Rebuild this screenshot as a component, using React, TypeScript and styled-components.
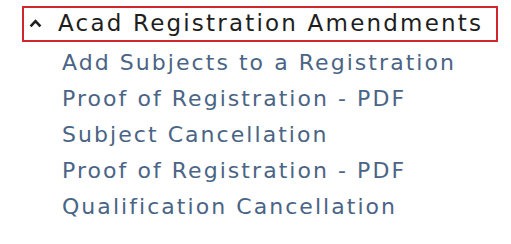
import React from "react";
import styled, { createGlobalStyle } from "styled-components";

const GlobalStyle = createGlobalStyle`
  html, body {
    margin: 0;
    padding: 0;
    background: #ffffff;
  }
  body {
    font-family: "DejaVu Sans", "Noto Sans", sans-serif;
  }
`;

const items = [
  "Add Subjects to a Registration",
  "Proof of Registration - PDF",
  "Subject Cancellation",
  "Proof of Registration - PDF",
  "Qualification Cancellation",
];

const Menu = styled.nav`
  padding: 6px 13px 0 22px;
  width: 476px;
`;

const Header = styled.button`
  display: flex;
  align-items: center;
  gap: 16px;
  width: 100%;
  height: 36px;
  box-sizing: border-box;
  padding: 0 0 2px 5px;
  border: 2px solid #d0272f;
  background: #fff;
  color: #1e1e1e;
  font-family: inherit;
  font-size: 23px;
  letter-spacing: 2.2px;
  white-space: nowrap;
  cursor: pointer;
`;

const Chevron = styled.svg`
  width: 13px;
  height: 9px;
  flex: none;
  margin-top: 1px;
`;

const List = styled.ul`
  list-style: none;
  margin: 1px 0 0;
  padding: 0 0 0 40px;
`;

const Item = styled.li`
  height: 36px;
  box-sizing: border-box;
  display: flex;
  align-items: center;
  padding-top: 3px;
  font-size: 22px;
  letter-spacing: 2.05px;
  white-space: nowrap;
  color: #4a6485;
`;

export default function App() {
  return (
    <>
      <GlobalStyle />
      <Menu>
        <Header>
          <Chevron viewBox="0 0 13 9">
            <path d="M1.6 7.4 L6.5 2.2 L11.4 7.4" fill="none" stroke="#1e1e1e" strokeWidth="2.6" />
          </Chevron>
          Acad Registration Amendments
        </Header>
        <List>
          {items.map((t, i) => (
            <Item key={i}>{t}</Item>
          ))}
        </List>
      </Menu>
    </>
  );
}
